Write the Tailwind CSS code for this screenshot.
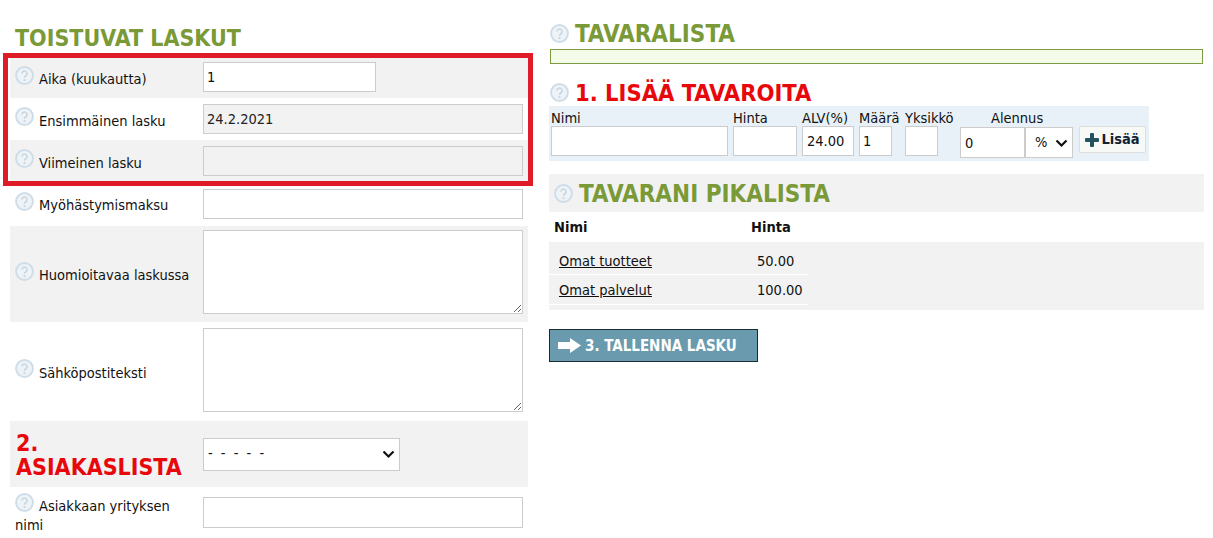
<!DOCTYPE html>
<html lang="fi">
<head>
<meta charset="utf-8">
<title>Toistuvat laskut</title>
<script src="https://cdn.jsdelivr.net/npm/@tailwindcss/browser@4"></script>
</head>
<body class="bg-white overflow-hidden font-['DejaVu_Sans_Condensed','DejaVu_Sans',sans-serif] [font-stretch:condensed] text-[14.500px] text-[#111]">
<svg class="hidden"><symbol id="q" viewBox="0 0 18 18"><circle cx="9" cy="9" r="8" fill="#eef3f7" stroke="#cfdde8" stroke-width="1.800"/><path d="M6.600 7.200a2.400 2.400 0 1 1 3.700 2c-.9.600-1.300 1-1.300 2" fill="none" stroke="#c8d6e0" stroke-width="1.500"/><circle cx="9" cy="13.400" r="1" fill="#c8d6e0"/></symbol></svg>
<div class="relative flex h-[538px] overflow-hidden">
  <section class="w-[549px] shrink-0 pl-[10px] pr-[21px]">
    <h1 class="h-[58px] pt-[24px] pl-[5px] text-[23px] leading-[28px] font-bold text-[#7a9a38]">TOISTUVAT LASKUT</h1>
    <div class="flex h-[40px] items-center bg-[#f2f2f2] pl-[5px] pr-[5px]"><div class="flex w-[188px] items-center gap-[5px]"><svg class="size-[19px] -mt-[6px]"><use href="#q"/></svg><span class="mt-[4px]">Aika (kuukautta)</span></div><input class="h-[30px] w-[173px] border border-[#ccc] bg-white px-[3px] -mt-[2px]" value="1"></div>
    <div class="flex h-[42px] items-center pl-[5px] pr-[5px]"><div class="flex w-[188px] items-center gap-[5px]"><svg class="size-[19px] -mt-[6px]"><use href="#q"/></svg><span class="mt-[5px]">Ensimmäinen lasku</span></div><input disabled class="h-[30px] w-[320px] border border-[#ccc] bg-[#f2f2f2] px-[3px] text-[#222]" value="24.2.2021"></div>
    <div class="flex h-[42px] items-center bg-[#f2f2f2] pl-[5px] pr-[5px]"><div class="flex w-[188px] items-center gap-[5px]"><svg class="size-[19px] -mt-[6px]"><use href="#q"/></svg><span class="mt-[5px]">Viimeinen lasku</span></div><input disabled class="h-[30px] w-[320px] border border-[#ccc] bg-[#f2f2f2] px-[3px]"></div>
    <div class="flex h-[44px] items-center pl-[5px] pr-[5px]"><div class="flex w-[188px] items-center gap-[5px]"><svg class="size-[19px] -mt-[6px]"><use href="#q"/></svg><span class="mt-[4px]">Myöhästymismaksu</span></div><input class="h-[30px] w-[320px] border border-[#ccc] bg-white px-[3px]"></div>
    <div class="flex h-[96px] items-center bg-[#f2f2f2] pl-[5px] pr-[5px]"><div class="flex w-[188px] items-center gap-[5px]"><svg class="size-[19px] -mt-[6px]"><use href="#q"/></svg><span class="mt-[4px]">Huomioitavaa laskussa</span></div><textarea class="h-[84px] w-[320px] border border-[#ccc] bg-white -mt-[4px]"></textarea></div>
    <div class="flex h-[98px] items-center pl-[5px] pr-[5px]"><div class="flex w-[188px] items-center gap-[5px]"><svg class="size-[19px] -mt-[6px]"><use href="#q"/></svg><span class="mt-[5px]">Sähköpostiteksti</span></div><textarea class="h-[84px] w-[320px] border border-[#ccc] bg-white -mt-[2px]"></textarea></div>
    <div class="mt-px flex h-[66px] items-center bg-[#f2f2f2] pl-[6px] pr-[5px]"><h2 class="mt-[2px] w-[187px] text-[23px] leading-[24px] font-bold text-[#e8070b]">2.<br>ASIAKASLISTA</h2><div class="relative"><select class="block h-[33px] w-[197px] appearance-none border border-[#ccc] bg-white px-[4px] tracking-[2px]"><option>- - - - -</option></select><svg class="pointer-events-none absolute right-[5px] top-[12px] h-[9px] w-[13px]" viewBox="0 0 13 9"><path d="M1.500 1.500l5 5 5-5" fill="none" stroke="#111" stroke-width="2.200"/></svg></div></div>
    <div class="flex h-[51px] items-center pl-[5px] pr-[5px]"><div class="mt-[6px] w-[188px] pr-[8px] leading-[19px]"><svg class="inline-block size-[19px] mr-[5px] -mt-[8px]"><use href="#q"/></svg>Asiakkaan yrityksen nimi</div><input class="h-[31px] w-[320px] border border-[#ccc] bg-white px-[3px]"></div>
  </section>
  <section class="w-[655px] shrink-0">
    <h2 class="flex h-[50px] items-end gap-[6px] pl-px pb-[2px] text-[24px] leading-[28px] font-bold text-[#7a9a38]"><svg class="size-[19px] mb-[5px]"><use href="#q"/></svg>TAVARALISTA</h2>
    <div class="ml-px -mt-px h-[15px] w-[653px] border border-[#7f9a45] bg-[#f5fbe9]"></div>
    <h2 class="flex h-[42px] items-end gap-[6px] pl-px text-[23.500px] leading-[26px] font-bold text-[#e8070b]"><svg class="size-[19px] mb-[4px]"><use href="#q"/></svg>1. LISÄÄ TAVAROITA</h2>
    <form class="flex h-[55px] w-[600px] items-start bg-[#e8f1f7] pl-[2px]">
      <label class="w-[182px]"><span class="block h-[20px] leading-[24px]">Nimi</span><input class="h-[30px] w-[177px] border border-[#ccc] bg-white px-[3px]"></label>
      <label class="w-[69px]"><span class="block h-[20px] leading-[24px]">Hinta</span><input class="h-[30px] w-[64px] border border-[#ccc] bg-white px-[3px]"></label>
      <label class="w-[57px]"><span class="block h-[20px] leading-[24px]">ALV(%)</span><input class="h-[30px] w-[52px] border border-[#ccc] bg-white px-[4px]" value="24.00"></label>
      <label class="w-[46px]"><span class="block h-[20px] leading-[24px]">Määrä</span><input class="h-[30px] w-[33px] border border-[#ccc] bg-white px-[3px]" value="1"></label>
      <label class="w-[55px]"><span class="block h-[20px] leading-[24px]">Yksikkö</span><input class="h-[30px] w-[33px] border border-[#ccc] bg-white px-[3px]"></label>
      <div class="w-[119px]"><span class="block h-[21px] pl-[31px] leading-[24px]">Alennus</span><div class="flex"><input class="h-[31px] w-[65px] border border-[#ccc] bg-white px-[4px]" value="0"><div class="relative"><select class="block h-[31px] w-[48px] appearance-none border border-[#ccc] bg-white pl-[9px]"><option>%</option></select><svg class="pointer-events-none absolute right-[5px] top-[12px] h-[9px] w-[13px]" viewBox="0 0 13 9"><path d="M1.500 1.500l5 5 5-5" fill="none" stroke="#111" stroke-width="2.200"/></svg></div></div></div>
      <button type="button" class="mt-[20px] flex h-[27px] w-[67px] items-center justify-center gap-[2px] rounded-[2px] border border-[#ddd] bg-[#f7f9f7] text-[14.500px] font-bold text-[#123]"><svg class="size-[14px]" viewBox="0 0 14 14"><path d="M5 1q0-1 1-1h2q1 0 1 1v4h4q1 0 1 1v2q0 1-1 1H9v4q0 1-1 1H6q-1 0-1-1V9H1q-1 0-1-1V6q0-1 1-1h4z" fill="#24525f"/></svg>Lisää</button>
    </form>
    <div class="mt-[13px] flex h-[38px] w-[655px] items-center gap-[6px] bg-[#f2f2f2] pl-[5px]"><svg class="size-[19px]"><use href="#q"/></svg><h2 class="mt-[2px] text-[24px] leading-[28px] font-bold text-[#7a9a38]">TAVARANI PIKALISTA</h2></div>
    <div class="flex h-[30px] items-center pl-[5px] pt-[2px] font-bold"><span class="w-[197px]">Nimi</span><span>Hinta</span></div>
    <div class="h-[68px] bg-[#f2f2f2] pt-[5px]">
      <div class="flex h-[28px] w-[259px] items-center border-b border-white pb-px pl-[10px] pt-[3px]"><a href="#" class="w-[198px] underline">Omat tuotteet</a><span>50.00</span></div>
      <div class="flex h-[30px] w-[259px] items-center border-b border-white pl-[10px] pt-[2px]"><a href="#" class="w-[198px] underline">Omat palvelut</a><span>100.00</span></div>
    </div>
    <button type="button" class="mt-[19px] flex h-[33px] w-[209px] items-center gap-[4px] border border-[#1c2b33] bg-[#6a9aae] pl-[8px] text-[15px] font-bold text-white"><svg class="h-[15px] w-[23px]" viewBox="0 0 23 15"><path d="M0 4h12V0l11 7.500-11 7.500v-4H0z" fill="#fff"/></svg><span class="mt-px">3. TALLENNA LASKU</span></button>
  </section>
  <div class="pointer-events-none absolute left-[3px] top-[53px] h-[133px] w-[530px] border-[5px] border-[#e01b28]"></div>
</div>
</body>
</html>
